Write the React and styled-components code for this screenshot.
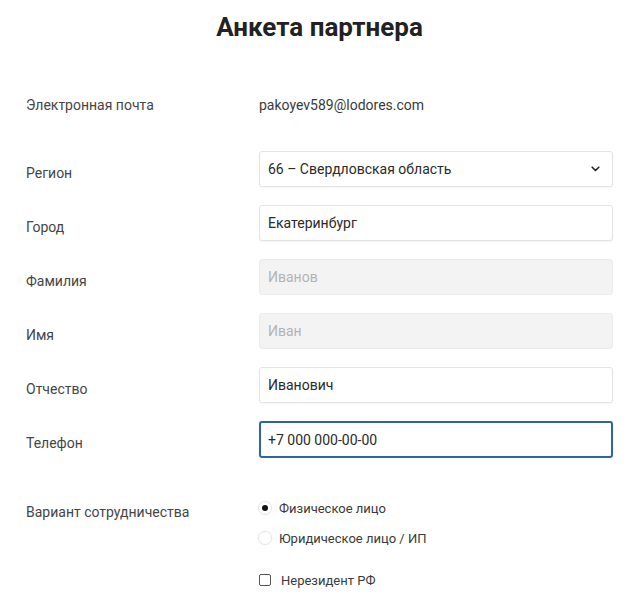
import React, { useEffect, useRef, useState } from 'react';
import styled, { createGlobalStyle } from 'styled-components';

const GlobalStyle = createGlobalStyle`
  body {
    margin: 0;
    background: #fff;
    font-family: Roboto, "Liberation Sans", Arial, sans-serif;
    color: #333;
  }
  * { box-sizing: border-box; }
`;

const Page = styled.div`
  width: 641px;
  padding: 11px 28px 20px 26px;
`;

const Title = styled.h1`
  margin: 0;
  font-size: 26px;
  line-height: 32px;
  font-weight: 700;
  color: #222;
  text-align: center;
`;

const Form = styled.div`
  display: grid;
  grid-template-columns: 233px 354px;
  row-gap: 18px;
  margin-top: 52px;
`;

const Label = styled.div`
  font-size: 14px;
  line-height: 20px;
  color: #454545;
  padding-top: ${p => p.$offset ?? 12}px;
`;

const Value = styled.div`
  font-size: 14px;
  line-height: 20px;
  color: #3a3a3a;
`;

/* extra vertical space between groups of rows (total = height + row gap) */
const Spacer = styled.div`
  grid-column: 1 / -1;
  height: ${p => p.$h}px;
  margin-top: -18px;
`;

const Field = styled.input`
  width: 100%;
  height: 36px;
  padding: 0 8px;
  font: inherit;
  font-size: 14px;
  color: #2a2a2a;
  background: ${p => (p.disabled ? '#f3f3f3' : '#fff')};
  border: 1px solid ${p => (p.disabled ? '#ececec' : '#e4e4e4')};
  border-radius: 3px;
  box-shadow: ${p => (p.disabled ? 'none' : '0 1px 2px rgba(0, 0, 0, 0.05)')};
  outline: none;
  caret-color: #111;

  &:disabled {
    color: #b3b3b3;
  }

  &:focus {
    height: 37px;
    border: 2px solid #2d64a5;
    padding: 0 7px;
    box-shadow: none;
  }
`;

const SelectBox = styled.div`
  height: 36px;
  display: flex;
  align-items: center;
  justify-content: space-between;
  padding: 0 12px 0 8px;
  font-size: 14px;
  color: #2a2a2a;
  background: #fff;
  border: 1px solid #e4e4e4;
  border-radius: 3px;
  box-shadow: 0 1px 2px rgba(0, 0, 0, 0.05);
`;

const Options = styled.div`
  display: flex;
  flex-direction: column;
  gap: 10px;
`;

const Option = styled.label`
  display: flex;
  align-items: center;
  height: 20px;
  font-size: 13px;
  color: #3a3a3a;
  gap: ${p => (p.$check ? 10 : 7)}px;
  margin-top: ${p => (p.$check ? 12 : 0)}px;
  cursor: pointer;
`;

const RadioDot = styled.span`
  width: 14px;
  height: 14px;
  margin-left: -1px;
  border-radius: 50%;
  border: 1px solid #e6e6e6;
  box-shadow: 0 0 2px rgba(0, 0, 0, 0.08);
  display: flex;
  align-items: center;
  justify-content: center;

  &::after {
    content: '';
    width: 6px;
    height: 6px;
    border-radius: 50%;
    background: ${p => (p.$checked ? '#111' : 'transparent')};
  }
`;

const CheckBox = styled.span`
  width: 12px;
  height: 12px;
  border: 1px solid #555;
  border-radius: 2px;
  background: ${p => (p.$checked ? '#333' : '#fff')};
`;

const Chevron = () => (
  <svg width="9" height="6" viewBox="0 0 9 6" fill="none">
    <path d="M1.2 1.2 L4.5 4.5 L7.8 1.2" stroke="#222" strokeWidth="1.6" strokeLinecap="round" strokeLinejoin="round" />
  </svg>
);

export default function App() {
  const phoneRef = useRef(null);
  const [city, setCity] = useState('Екатеринбург');
  const [middle, setMiddle] = useState('Иванович');
  const [phone, setPhone] = useState('+7 000 000-00-00');
  const [kind, setKind] = useState('person');
  const [nonResident, setNonResident] = useState(false);

  useEffect(() => {
    const el = phoneRef.current;
    if (el) {
      el.focus();
      el.setSelectionRange(el.value.length, el.value.length);
    }
  }, []);

  return (
    <>
      <GlobalStyle />
      <Page>
        <Title>Анкета партнера</Title>
        <Form>
          <Label $offset={0}>Электронная почта</Label>
          <Value>pakoyev589@lodores.com</Value>
          <Spacer $h={16} />

          <Label>Регион</Label>
          <SelectBox>
            <span>66 – Свердловская область</span>
            <Chevron />
          </SelectBox>

          <Label>Город</Label>
          <Field value={city} onChange={e => setCity(e.target.value)} />

          <Label>Фамилия</Label>
          <Field disabled value="Иванов" />

          <Label>Имя</Label>
          <Field disabled value="Иван" />

          <Label>Отчество</Label>
          <Field value={middle} onChange={e => setMiddle(e.target.value)} />

          <Label>Телефон</Label>
          <Field ref={phoneRef} value={phone} onChange={e => setPhone(e.target.value)} />
          <Spacer $h={22} />

          <Label $offset={4}>Вариант сотрудничества</Label>
          <Options>
            <Option onClick={() => setKind('person')}>
              <RadioDot $checked={kind === 'person'} />
              Физическое лицо
            </Option>
            <Option onClick={() => setKind('company')}>
              <RadioDot $checked={kind === 'company'} />
              Юридическое лицо / ИП
            </Option>
            <Option $check onClick={() => setNonResident(v => !v)}>
              <CheckBox $checked={nonResident} />
              Нерезидент РФ
            </Option>
          </Options>
        </Form>
      </Page>
    </>
  );
}
